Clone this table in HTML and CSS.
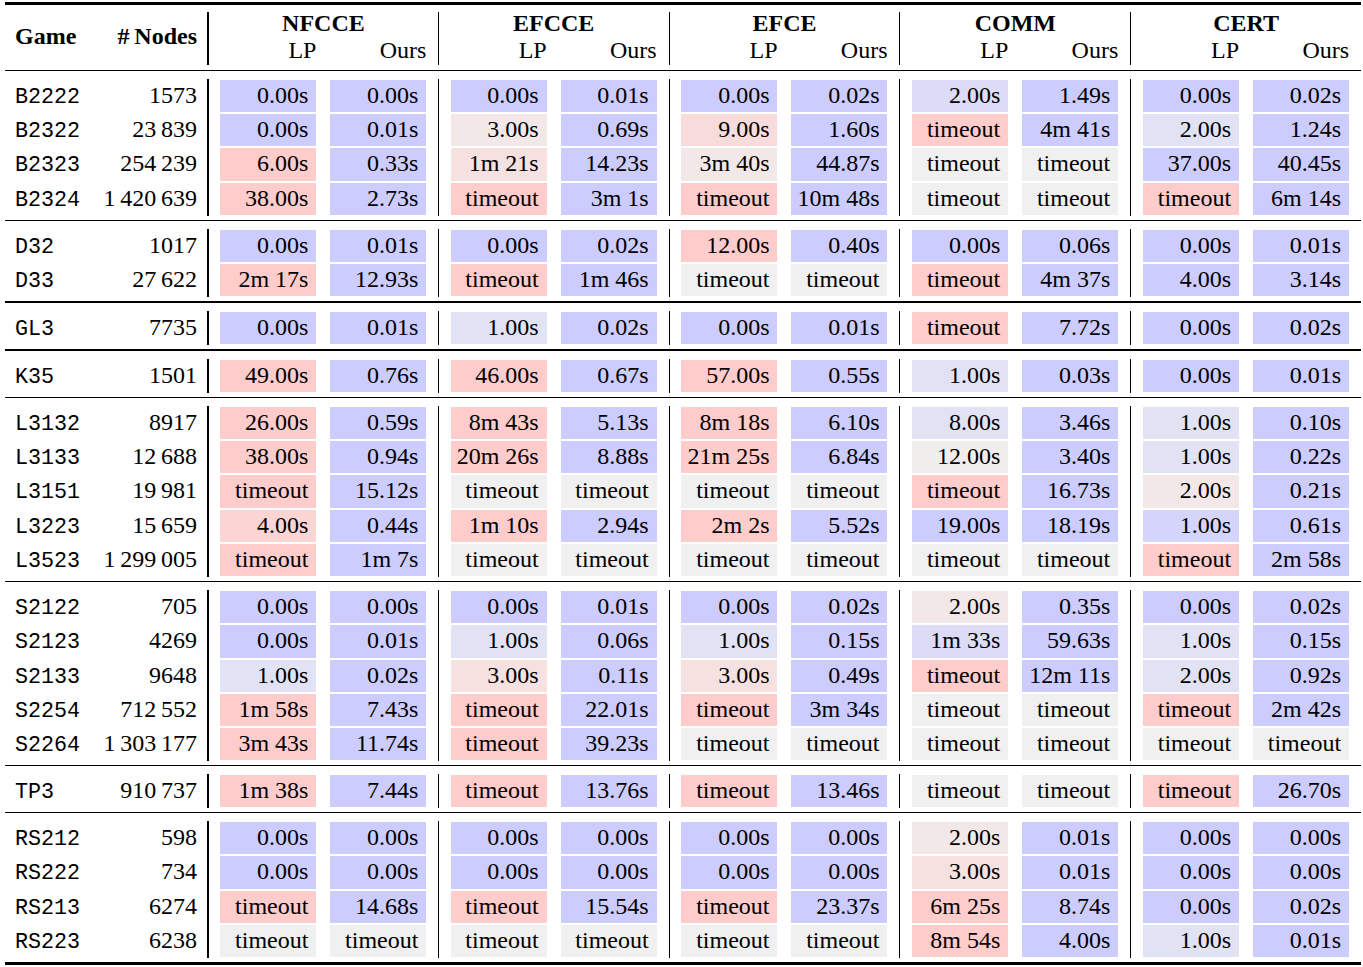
FILE: index.html
```html
<!DOCTYPE html>
<html>
<head>
<meta charset="utf-8">
<link rel="stylesheet" href="styles.css">
</head>
<body>
<div class="table">
  <div class="head">
    <div class="hrow">
      <div class="lbl"><span>Game</span><span>#&#8201;Nodes</span></div>
      <div class="hgrp"><div class="gname">NFCCE</div><div class="sub"><span>LP</span><span>Ours</span></div></div>
      <div class="hgrp"><div class="gname">EFCCE</div><div class="sub"><span>LP</span><span>Ours</span></div></div>
      <div class="hgrp"><div class="gname">EFCE</div><div class="sub"><span>LP</span><span>Ours</span></div></div>
      <div class="hgrp"><div class="gname">COMM</div><div class="sub"><span>LP</span><span>Ours</span></div></div>
      <div class="hgrp"><div class="gname">CERT</div><div class="sub"><span>LP</span><span>Ours</span></div></div>
    </div>
  </div>

  <div class="sec">
    <div class="row">
      <div class="lbl"><span class="game">B2222</span><span>1573</span></div>
      <div class="grp"><span class="c b">0.00s</span><span class="c b">0.00s</span></div>
      <div class="grp"><span class="c b">0.00s</span><span class="c b">0.01s</span></div>
      <div class="grp"><span class="c b">0.00s</span><span class="c b">0.02s</span></div>
      <div class="grp"><span class="c b2">2.00s</span><span class="c b">1.49s</span></div>
      <div class="grp"><span class="c b">0.00s</span><span class="c b">0.02s</span></div>
    </div>
    <div class="row">
      <div class="lbl"><span class="game">B2322</span><span>23&#8201;839</span></div>
      <div class="grp"><span class="c b">0.00s</span><span class="c b">0.01s</span></div>
      <div class="grp"><span class="c p1">3.00s</span><span class="c b">0.69s</span></div>
      <div class="grp"><span class="c p3">9.00s</span><span class="c b">1.60s</span></div>
      <div class="grp"><span class="c r">timeout</span><span class="c b">4m 41s</span></div>
      <div class="grp"><span class="c b3">2.00s</span><span class="c b">1.24s</span></div>
    </div>
    <div class="row">
      <div class="lbl"><span class="game">B2323</span><span>254&#8201;239</span></div>
      <div class="grp"><span class="c r">6.00s</span><span class="c b">0.33s</span></div>
      <div class="grp"><span class="c p2">1m 21s</span><span class="c b">14.23s</span></div>
      <div class="grp"><span class="c p1">3m 40s</span><span class="c b">44.87s</span></div>
      <div class="grp"><span class="c g">timeout</span><span class="c g">timeout</span></div>
      <div class="grp"><span class="c b">37.00s</span><span class="c b">40.45s</span></div>
    </div>
    <div class="row">
      <div class="lbl"><span class="game">B2324</span><span>1&#8201;420&#8201;639</span></div>
      <div class="grp"><span class="c r">38.00s</span><span class="c b">2.73s</span></div>
      <div class="grp"><span class="c r">timeout</span><span class="c b">3m 1s</span></div>
      <div class="grp"><span class="c r">timeout</span><span class="c b">10m 48s</span></div>
      <div class="grp"><span class="c g">timeout</span><span class="c g">timeout</span></div>
      <div class="grp"><span class="c r">timeout</span><span class="c b">6m 14s</span></div>
    </div>
  </div>

  <div class="sec thick">
    <div class="row">
      <div class="lbl"><span class="game">D32</span><span>1017</span></div>
      <div class="grp"><span class="c b">0.00s</span><span class="c b">0.01s</span></div>
      <div class="grp"><span class="c b">0.00s</span><span class="c b">0.02s</span></div>
      <div class="grp"><span class="c r">12.00s</span><span class="c b">0.40s</span></div>
      <div class="grp"><span class="c b">0.00s</span><span class="c b">0.06s</span></div>
      <div class="grp"><span class="c b">0.00s</span><span class="c b">0.01s</span></div>
    </div>
    <div class="row">
      <div class="lbl"><span class="game">D33</span><span>27&#8201;622</span></div>
      <div class="grp"><span class="c r">2m 17s</span><span class="c b">12.93s</span></div>
      <div class="grp"><span class="c r">timeout</span><span class="c b">1m 46s</span></div>
      <div class="grp"><span class="c g">timeout</span><span class="c g">timeout</span></div>
      <div class="grp"><span class="c r">timeout</span><span class="c b">4m 37s</span></div>
      <div class="grp"><span class="c b">4.00s</span><span class="c b">3.14s</span></div>
    </div>
  </div>

  <div class="sec thick">
    <div class="row">
      <div class="lbl"><span class="game">GL3</span><span>7735</span></div>
      <div class="grp"><span class="c b">0.00s</span><span class="c b">0.01s</span></div>
      <div class="grp"><span class="c b3">1.00s</span><span class="c b">0.02s</span></div>
      <div class="grp"><span class="c b">0.00s</span><span class="c b">0.01s</span></div>
      <div class="grp"><span class="c r">timeout</span><span class="c b">7.72s</span></div>
      <div class="grp"><span class="c b">0.00s</span><span class="c b">0.02s</span></div>
    </div>
  </div>

  <div class="sec">
    <div class="row">
      <div class="lbl"><span class="game">K35</span><span>1501</span></div>
      <div class="grp"><span class="c r">49.00s</span><span class="c b">0.76s</span></div>
      <div class="grp"><span class="c r">46.00s</span><span class="c b">0.67s</span></div>
      <div class="grp"><span class="c r">57.00s</span><span class="c b">0.55s</span></div>
      <div class="grp"><span class="c b3">1.00s</span><span class="c b">0.03s</span></div>
      <div class="grp"><span class="c b">0.00s</span><span class="c b">0.01s</span></div>
    </div>
  </div>

  <div class="sec">
    <div class="row">
      <div class="lbl"><span class="game">L3132</span><span>8917</span></div>
      <div class="grp"><span class="c r">26.00s</span><span class="c b">0.59s</span></div>
      <div class="grp"><span class="c r">8m 43s</span><span class="c b">5.13s</span></div>
      <div class="grp"><span class="c r">8m 18s</span><span class="c b">6.10s</span></div>
      <div class="grp"><span class="c b3">8.00s</span><span class="c b">3.46s</span></div>
      <div class="grp"><span class="c b3">1.00s</span><span class="c b">0.10s</span></div>
    </div>
    <div class="row">
      <div class="lbl"><span class="game">L3133</span><span>12&#8201;688</span></div>
      <div class="grp"><span class="c r">38.00s</span><span class="c b">0.94s</span></div>
      <div class="grp"><span class="c r">20m 26s</span><span class="c b">8.88s</span></div>
      <div class="grp"><span class="c r">21m 25s</span><span class="c b">6.84s</span></div>
      <div class="grp"><span class="c p0">12.00s</span><span class="c b">3.40s</span></div>
      <div class="grp"><span class="c b3">1.00s</span><span class="c b">0.22s</span></div>
    </div>
    <div class="row">
      <div class="lbl"><span class="game">L3151</span><span>19&#8201;981</span></div>
      <div class="grp"><span class="c r">timeout</span><span class="c b">15.12s</span></div>
      <div class="grp"><span class="c g">timeout</span><span class="c g">timeout</span></div>
      <div class="grp"><span class="c g">timeout</span><span class="c g">timeout</span></div>
      <div class="grp"><span class="c r">timeout</span><span class="c b">16.73s</span></div>
      <div class="grp"><span class="c p1">2.00s</span><span class="c b">0.21s</span></div>
    </div>
    <div class="row">
      <div class="lbl"><span class="game">L3223</span><span>15&#8201;659</span></div>
      <div class="grp"><span class="c p4">4.00s</span><span class="c b">0.44s</span></div>
      <div class="grp"><span class="c r">1m 10s</span><span class="c b">2.94s</span></div>
      <div class="grp"><span class="c r">2m 2s</span><span class="c b">5.52s</span></div>
      <div class="grp"><span class="c b">19.00s</span><span class="c b">18.19s</span></div>
      <div class="grp"><span class="c b1">1.00s</span><span class="c b">0.61s</span></div>
    </div>
    <div class="row">
      <div class="lbl"><span class="game">L3523</span><span>1&#8201;299&#8201;005</span></div>
      <div class="grp"><span class="c r">timeout</span><span class="c b">1m 7s</span></div>
      <div class="grp"><span class="c g">timeout</span><span class="c g">timeout</span></div>
      <div class="grp"><span class="c g">timeout</span><span class="c g">timeout</span></div>
      <div class="grp"><span class="c g">timeout</span><span class="c g">timeout</span></div>
      <div class="grp"><span class="c r">timeout</span><span class="c b">2m 58s</span></div>
    </div>
  </div>

  <div class="sec">
    <div class="row">
      <div class="lbl"><span class="game">S2122</span><span>705</span></div>
      <div class="grp"><span class="c b">0.00s</span><span class="c b">0.00s</span></div>
      <div class="grp"><span class="c b">0.00s</span><span class="c b">0.01s</span></div>
      <div class="grp"><span class="c b">0.00s</span><span class="c b">0.02s</span></div>
      <div class="grp"><span class="c p1">2.00s</span><span class="c b">0.35s</span></div>
      <div class="grp"><span class="c b">0.00s</span><span class="c b">0.02s</span></div>
    </div>
    <div class="row">
      <div class="lbl"><span class="game">S2123</span><span>4269</span></div>
      <div class="grp"><span class="c b">0.00s</span><span class="c b">0.01s</span></div>
      <div class="grp"><span class="c b3">1.00s</span><span class="c b">0.06s</span></div>
      <div class="grp"><span class="c b3">1.00s</span><span class="c b">0.15s</span></div>
      <div class="grp"><span class="c b2">1m 33s</span><span class="c b">59.63s</span></div>
      <div class="grp"><span class="c b3">1.00s</span><span class="c b">0.15s</span></div>
    </div>
    <div class="row">
      <div class="lbl"><span class="game">S2133</span><span>9648</span></div>
      <div class="grp"><span class="c b3">1.00s</span><span class="c b">0.02s</span></div>
      <div class="grp"><span class="c p2">3.00s</span><span class="c b">0.11s</span></div>
      <div class="grp"><span class="c p2">3.00s</span><span class="c b">0.49s</span></div>
      <div class="grp"><span class="c r">timeout</span><span class="c b">12m 11s</span></div>
      <div class="grp"><span class="c b3">2.00s</span><span class="c b">0.92s</span></div>
    </div>
    <div class="row">
      <div class="lbl"><span class="game">S2254</span><span>712&#8201;552</span></div>
      <div class="grp"><span class="c r">1m 58s</span><span class="c b">7.43s</span></div>
      <div class="grp"><span class="c r">timeout</span><span class="c b">22.01s</span></div>
      <div class="grp"><span class="c r">timeout</span><span class="c b">3m 34s</span></div>
      <div class="grp"><span class="c g">timeout</span><span class="c g">timeout</span></div>
      <div class="grp"><span class="c r">timeout</span><span class="c b">2m 42s</span></div>
    </div>
    <div class="row">
      <div class="lbl"><span class="game">S2264</span><span>1&#8201;303&#8201;177</span></div>
      <div class="grp"><span class="c r">3m 43s</span><span class="c b">11.74s</span></div>
      <div class="grp"><span class="c r">timeout</span><span class="c b">39.23s</span></div>
      <div class="grp"><span class="c g">timeout</span><span class="c g">timeout</span></div>
      <div class="grp"><span class="c g">timeout</span><span class="c g">timeout</span></div>
      <div class="grp"><span class="c g">timeout</span><span class="c g">timeout</span></div>
    </div>
  </div>

  <div class="sec">
    <div class="row">
      <div class="lbl"><span class="game">TP3</span><span>910&#8201;737</span></div>
      <div class="grp"><span class="c r">1m 38s</span><span class="c b">7.44s</span></div>
      <div class="grp"><span class="c r">timeout</span><span class="c b">13.76s</span></div>
      <div class="grp"><span class="c r">timeout</span><span class="c b">13.46s</span></div>
      <div class="grp"><span class="c g">timeout</span><span class="c g">timeout</span></div>
      <div class="grp"><span class="c r">timeout</span><span class="c b">26.70s</span></div>
    </div>
  </div>

  <div class="sec">
    <div class="row">
      <div class="lbl"><span class="game">RS212</span><span>598</span></div>
      <div class="grp"><span class="c b">0.00s</span><span class="c b">0.00s</span></div>
      <div class="grp"><span class="c b">0.00s</span><span class="c b">0.00s</span></div>
      <div class="grp"><span class="c b">0.00s</span><span class="c b">0.00s</span></div>
      <div class="grp"><span class="c p1">2.00s</span><span class="c b">0.01s</span></div>
      <div class="grp"><span class="c b">0.00s</span><span class="c b">0.00s</span></div>
    </div>
    <div class="row">
      <div class="lbl"><span class="game">RS222</span><span>734</span></div>
      <div class="grp"><span class="c b">0.00s</span><span class="c b">0.00s</span></div>
      <div class="grp"><span class="c b">0.00s</span><span class="c b">0.00s</span></div>
      <div class="grp"><span class="c b">0.00s</span><span class="c b">0.00s</span></div>
      <div class="grp"><span class="c p2">3.00s</span><span class="c b">0.01s</span></div>
      <div class="grp"><span class="c b">0.00s</span><span class="c b">0.00s</span></div>
    </div>
    <div class="row">
      <div class="lbl"><span class="game">RS213</span><span>6274</span></div>
      <div class="grp"><span class="c r">timeout</span><span class="c b">14.68s</span></div>
      <div class="grp"><span class="c r">timeout</span><span class="c b">15.54s</span></div>
      <div class="grp"><span class="c r">timeout</span><span class="c b">23.37s</span></div>
      <div class="grp"><span class="c r">6m 25s</span><span class="c b">8.74s</span></div>
      <div class="grp"><span class="c b">0.00s</span><span class="c b">0.02s</span></div>
    </div>
    <div class="row">
      <div class="lbl"><span class="game">RS223</span><span>6238</span></div>
      <div class="grp"><span class="c g">timeout</span><span class="c g">timeout</span></div>
      <div class="grp"><span class="c g">timeout</span><span class="c g">timeout</span></div>
      <div class="grp"><span class="c g">timeout</span><span class="c g">timeout</span></div>
      <div class="grp"><span class="c r">8m 54s</span><span class="c b">4.00s</span></div>
      <div class="grp"><span class="c b3">1.00s</span><span class="c b">0.01s</span></div>
    </div>
  </div>
</div>
</body>
</html>
```

FILE: styles.css
```css
html, body {
  margin: 0;
  padding: 0;
  background: #ffffff;
}

.table {
  margin: 2px 0 0 5px;
  width: 1356px;
  border-top: 3px solid #000;
  border-bottom: 3px solid #000;
  font-family: "Liberation Serif", "Times New Roman", "DejaVu Serif", serif;
  font-size: 24px;
  color: #000;
}

.head {
  padding: 7px 0 5px;
  border-bottom: 1px solid #000;
}

.hrow,
.row {
  display: grid;
  grid-template-columns: 202px repeat(5, 1fr);
}

.hrow {
  height: 53px;
}

.row {
  height: 34.3px;
}

.lbl {
  display: flex;
  justify-content: space-between;
  align-items: center;
  padding: 0 10px 0 10px;
  white-space: nowrap;
}

.hrow .lbl {
  font-weight: bold;
  padding-bottom: 4px;
}

.row .lbl {
  align-items: baseline;
  padding-top: 1px;
  line-height: 30px;
}

.game {
  font-family: "Liberation Mono", "Courier New", "DejaVu Sans Mono", monospace;
  font-size: 21.7px;
}

.hgrp {
  border-left: 1px solid #000;
  display: flex;
  flex-direction: column;
  align-items: center;
}

.lbl + .hgrp,
.lbl + .grp {
  border-left-width: 2px;
}

.gname {
  font-weight: bold;
  line-height: 22px;
}

.sub {
  display: flex;
  gap: 14px;
  line-height: 28px;
  margin-top: 2px;
}

.sub span {
  width: 96px;
  text-align: right;
}

.sec {
  padding: 7.7px 0 4px;
  border-bottom: 1px solid #000;
}

.sec.thick {
  border-bottom-width: 2px;
}

.sec:last-child {
  border-bottom: none;
}

.grp {
  border-left: 1px solid #000;
  display: flex;
  justify-content: center;
  align-items: center;
  gap: 14px;
}

.c {
  display: block;
  width: 96px;
  height: 32.3px;
  box-sizing: border-box;
  text-align: right;
  padding: 0 8px 2px 0;
  line-height: 30.3px;
  white-space: nowrap;
}

.b  { background: #ccccff; }
.b1 { background: #d5d5fb; }
.b2 { background: #dcdcf8; }
.b3 { background: #e2e2f5; }
.p0 { background: #f2eded; }
.p1 { background: #f3e8e8; }
.p2 { background: #f6e1e1; }
.p3 { background: #f8dcdc; }
.p4 { background: #fbd4d4; }
.r  { background: #ffcccc; }
.g  { background: #f0f0f0; }
```
